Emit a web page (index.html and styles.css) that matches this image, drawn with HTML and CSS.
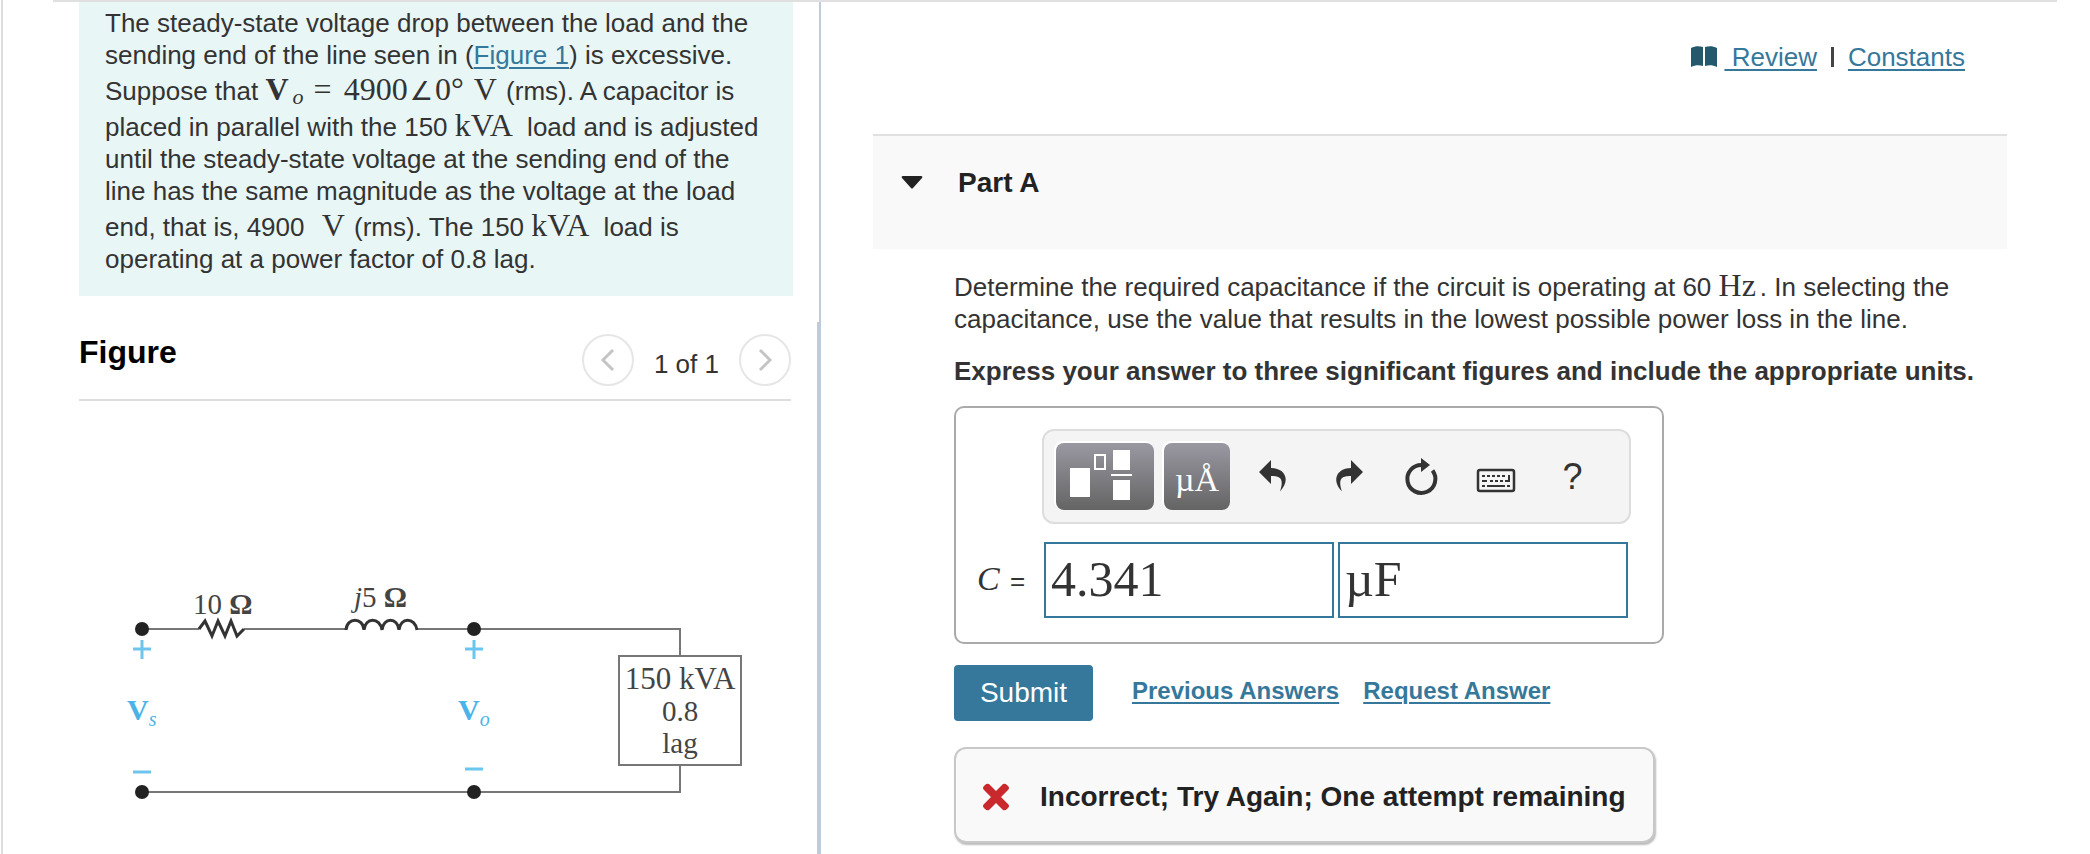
FILE: index.html
```html
<!DOCTYPE html>
<html lang="en">
<head>
<meta charset="utf-8">
<title>Part A - Power factor correction</title>
<link rel="stylesheet" href="styles.css">
</head>
<body>
<div class="page">
  <div class="top-rule"></div>
  <div class="columns">
    <aside class="side">
      <section class="problem-panel">
        <p class="problem">The steady-state voltage drop between the load and the sending end of the line seen in (<a href="#figure">Figure 1</a>) is excessive. Suppose that <span class="math"><b>V</b><i class="sub">o</i><span class="rel">=</span>4900<span class="angle">∠</span>0°<span class="unit">V</span></span> (rms). A capacitor is placed in parallel with the 150 <span class="math kva">kVA</span> load and is adjusted until the steady-state voltage at the sending end of the line has the same magnitude as the voltage at the load end, that is, 4900 <span class="math"><span class="unit">V</span></span> (rms). The 150 <span class="math kva">kVA</span> load is operating at a power factor of 0.8 lag.</p>
      </section>
      <section class="figure-panel" id="figure">
        <header class="figure-head">
          <h2>Figure</h2>
          <div class="pager">
            <button class="round" aria-label="Previous figure"><svg width="16" height="24" viewBox="0 0 16 24"><path d="M13 2 3 12l10 10"/></svg></button>
            <span>1 of 1</span>
            <button class="round" aria-label="Next figure"><svg width="16" height="24" viewBox="0 0 16 24"><path d="M3 2l10 10L3 22"/></svg></button>
          </div>
        </header>
        <svg class="circuit" viewBox="79 401 712 420" role="img" aria-label="Circuit diagram">
          <g class="wire">
            <path d="M142 629H199M244 629H346M417 629H680V656M680 765V792H142"/>
            <rect x="619" y="656" width="122" height="109"/>
          </g>
          <path class="part" d="M199 629l6-8 7 15 6-15 7 15 6-15 6 15 7-7"/>
          <path class="part" d="M346 630c1-13 17-13 18 0c1-13 16-13 18 0c1-13 16-13 17 0c1-13 16-13 18 0"/>
          <g class="node"><circle cx="142" cy="629" r="7"/><circle cx="474" cy="629" r="7"/><circle cx="142" cy="792" r="7"/><circle cx="474" cy="792" r="7"/></g>
          <g class="polarity"><path d="M133 649h18M142 640v19M465 649h18M474 640v19M133 772h18M465 769h18"/></g>
          <g class="label">
            <text x="193" y="614">10 <tspan class="ohm">Ω</tspan></text>
            <text x="354" y="607"><tspan class="it">j</tspan>5 <tspan class="ohm">Ω</tspan></text>
            <text x="680" y="689" class="mid wide">150 kVA</text>
            <text x="680" y="721" class="mid">0.8</text>
            <text x="680" y="753" class="mid">lag</text>
          </g>
          <g class="volt">
            <text x="127" y="720">V<tspan class="small" dy="6">s</tspan></text>
            <text x="458" y="720">V<tspan class="small" dy="6">o</tspan></text>
          </g>
        </svg>
      </section>
    </aside>

    <main class="main">
      <nav class="links">
        <svg class="book" width="26" height="22" viewBox="0 0 26 22"><path d="M0 2C4 0 8 0 12 1V20C8 19 4 19 0 21ZM14 1C18 0 22 0 26 2V21C22 19 18 19 14 20Z"/></svg>
        <a class="review" href="#review">&nbsp;Review</a>
        <span class="bar"></span>
        <a href="#constants">Constants</a>
      </nav>
      <header class="part-head">
        <svg width="22" height="13" viewBox="0 0 22 13"><path d="M2 0H20Q22 0 21 2L12 12Q11 13 10 12L1 2Q0 0 2 0Z"/></svg>
        <h1>Part A</h1>
      </header>
      <div class="content">
        <p class="question">Determine the required capacitance if the circuit is operating at 60 <span class="math hz">Hz</span>. In selecting the capacitance, use the value that results in the lowest possible power loss in the line.</p>
        <p class="express">Express your answer to three significant figures and include the appropriate units.</p>
        <form class="answer">
          <div class="toolbar">
            <button type="button" class="tile tile-wide" aria-label="Templates"><svg width="98" height="67" viewBox="0 0 98 67"><path d="M14 25H34V54H14ZM57 7H74V27H57ZM55 31H76V33H55ZM57 37H74V57H57Z" fill="#fff"/><rect x="39" y="12" width="10" height="14" fill="none" stroke="#fff" stroke-width="2"/></svg></button>
            <button type="button" class="tile tile-unit">µÅ</button>
            <div class="tools">
              <button type="button" class="tool" aria-label="Undo"><svg width="75" height="67" viewBox="0 0 75 67"><path class="solid" d="M24 29 36 17V25C50 25 56 37 45 48.500C49 36 46 33 36 33V41Z"/></svg></button>
              <button type="button" class="tool" aria-label="Redo"><svg width="75" height="67" viewBox="0 0 75 67"><path class="solid" d="M53 29 41 17V25C27 25 21 37 32 48.500C28 36 31 33 41 33V41Z"/></svg></button>
              <button type="button" class="tool" aria-label="Reset"><svg width="75" height="67" viewBox="0 0 75 67"><path class="solid" d="M36 15 45 22 36 29Z"/><path d="M47.500 27.500A14 14 0 1 1 37 22" fill="none" stroke="#333" stroke-width="4"/></svg></button>
              <button type="button" class="tool" aria-label="Keyboard"><svg width="75" height="67" viewBox="0 0 75 67"><rect x="18" y="27" width="36" height="21" rx="2" fill="none" stroke="#333" stroke-width="2.500"/><path class="solid" d="M22 32h3v2h-3zM27 32h3v2h-3zM32 32h3v2h-3zM37 32h3v2h-3zM42 32h3v2h-3zM48 32h2v7h-5v-2h3zM22 37h5v2h-5zM30 37h3v2h-3zM35 37h3v2h-3zM40 37h3v2h-3zM22 42h3v2h-3zM27 42h18v2h-18zM47 42h3v2h-3z"/></svg></button>
              <button type="button" class="tool help">?</button>
            </div>
          </div>
          <div class="entry">
            <label for="value"><i>C</i> =</label>
            <input id="value" type="text" value="4.341">
            <input id="units" type="text" value="µF" aria-label="Units">
          </div>
        </form>
        <div class="actions">
          <button class="submit">Submit</button>
          <a href="#previous">Previous Answers</a>
          <a href="#request">Request Answer</a>
        </div>
        <div class="feedback">
          <svg width="28" height="28" viewBox="0 0 28 28"><path d="M7 1 14 8 21 1Q23 0 25 2L26 3Q28 5 26 7L19 14 26 21Q28 23 26 25L25 26Q23 28 21 27L14 20 7 27Q5 28 3 26L2 25Q0 23 2 21L9 14 2 7Q0 5 2 3L3 2Q5 0 7 1Z"/></svg>
          <strong>Incorrect; Try Again; One attempt remaining</strong>
        </div>
      </div>
    </main>
  </div>
</div>
</body>
</html>
```

FILE: styles.css
```css
* { box-sizing: border-box; }
body {
  margin: 0;
  background: #fff;
  color: #333;
  font: 26px/32px "Liberation Sans", Arial, sans-serif;
}
h1, h2, p { margin: 0; }
button { font: inherit; padding: 0; cursor: pointer; }
svg { display: block; }
a {
  color: #35789b;
  text-decoration-thickness: 2px;
  text-underline-offset: 3px;
}

.page {
  display: flex;
  flex-direction: column;
  min-height: 100vh;
  margin-left: 1px;
  border-left: 2px solid #ddd;
}
.top-rule { height: 2px; margin: 0 33px 0 50px; background: #e0e0e0; }
.columns { flex: 1; display: grid; grid-template-columns: 818px 1fr; }

.side { display: flex; flex-direction: column; }
.problem-panel {
  padding: 0 26px 26px 76px;
  border-right: 2px solid #becbdc;
}
.problem { padding: 5px 26px 21px; background: #e8f6f6; }
.math {
  font-family: "Liberation Serif", "Times New Roman", serif;
  font-size: 32px;
  line-height: 36px;
}
.kva { margin-right: 7px; }
.hz { margin-right: 4px; }
.sub { font-size: 22px; line-height: 20px; vertical-align: -4px; margin-left: 4px; }
.rel { margin: 0 12px 0 10px; }
.angle { margin: 0 2px; font-family: "DejaVu Sans", sans-serif; font-size: 26px; line-height: 32px; }
.unit { margin: 0 2px 0 10px; }

.figure-panel {
  flex: 1;
  padding: 12px 26px 0 76px;
  border-right: 4px solid #becbdc;
}
.figure-head {
  display: flex;
  justify-content: space-between;
  height: 67px;
  border-bottom: 2px solid #ddd;
}
.figure-head h2 { color: #000; font-size: 32px; line-height: 36px; }
.pager { display: flex; gap: 20px; }
.pager span { padding-top: 14px; }
.round {
  display: grid;
  place-items: center;
  width: 52px;
  height: 52px;
  border: 2px solid #e6e6e6;
  border-radius: 50%;
  background: #fff;
}
.round path { fill: none; stroke: #c4c4c4; stroke-width: 3; }

.circuit { width: 100%; font-family: "Liberation Serif", "Times New Roman", serif; }
.wire { fill: none; stroke: #777; stroke-width: 2; }
.part { fill: none; stroke: #333; stroke-width: 3; }
.node { fill: #222; }
.polarity { fill: none; stroke: #6cc5ec; stroke-width: 3; }
.label { fill: #444; font-size: 29px; }
.mid { text-anchor: middle; }
.wide { font-size: 31px; }
.ohm { font-weight: bold; }
.it { font-style: italic; }
.volt { fill: #4ab3e8; font-size: 30px; font-weight: bold; }
.small { font-size: 20px; font-style: italic; font-weight: normal; }

.main { padding: 0 83px 8px 52px; }
.links {
  display: flex;
  justify-content: flex-end;
  height: 132px;
  padding: 39px 42px 0 0;
}
.book { margin: 5px 7px 0 0; fill: #24586d; }
.bar { width: 3px; height: 20px; margin: 6px 14px 0; background: #444; }
.part-head {
  display: flex;
  gap: 35px;
  padding: 31px 28px 50px;
  border-top: 2px solid #e0e0e0;
  background: #f9f9f9;
  color: #222;
}
.part-head svg { margin-top: 9px; fill: #222; }
.part-head h1 { font-size: 28px; line-height: 32px; }

.content { padding: 18px 0 0 81px; }
.express { margin-top: 20px; font-weight: bold; }
.answer {
  width: 710px;
  margin-top: 19px;
  padding: 21px 31px 24px 21px;
  border: 2px solid #aaa;
  border-radius: 10px;
}
.toolbar {
  display: flex;
  margin-left: 65px;
  padding: 12px;
  border: 2px solid #ddd;
  border-radius: 12px;
  background: #f4f4f4;
}
.tile {
  height: 67px;
  margin-right: 10px;
  border: 0;
  border-radius: 8px;
  background: linear-gradient(#9a98a2, #646464);
  box-shadow: -1px -1px 0 1px #fff;
  color: #fff;
}
.tile-wide { width: 98px; }
.tile-unit {
  width: 66px;
  padding-top: 6px;
  font-family: "Liberation Serif", "Times New Roman", serif;
  font-size: 34px;
}
.tools { display: flex; margin-left: -5px; }
.tool { width: 75px; height: 67px; border: 0; background: none; color: #333; }
.solid { fill: #333; }
.help { font-size: 36px; }
.entry { display: grid; grid-template-columns: 63px 290px 290px; gap: 4px; margin-top: 18px; }
.entry label { align-self: center; white-space: nowrap; }
.entry label i {
  margin-right: 3px;
  font-family: "Liberation Serif", "Times New Roman", serif;
  font-size: 34px;
}
.entry input {
  width: 100%;
  height: 76px;
  padding: 0 5px 2px;
  border: 2px solid #35789b;
  border-radius: 0;
  background: #fff;
  color: #333;
  font: 50px "Liberation Serif", "Times New Roman", serif;
}

.actions {
  display: flex;
  margin-top: 21px;
  font-size: 24px;
  font-weight: bold;
}
.actions a { margin: 10px 24px 0 0; }
.submit {
  width: 139px;
  height: 56px;
  margin-right: 39px;
  border: 0;
  border-radius: 4px;
  background: #35789b;
  color: #fff;
  font-size: 28px;
  font-weight: normal;
}
.feedback {
  display: flex;
  align-items: center;
  gap: 30px;
  width: fit-content;
  height: 96px;
  margin-top: 26px;
  padding: 4px 27px 0 26px;
  border: 2px solid #c8c8c8;
  border-radius: 12px;
  background: #f9f9f9;
  box-shadow: 1px 2px 2px #bbb;
  color: #222;
  font-size: 28px;
}
.feedback svg { fill: #c9282d; }
```
